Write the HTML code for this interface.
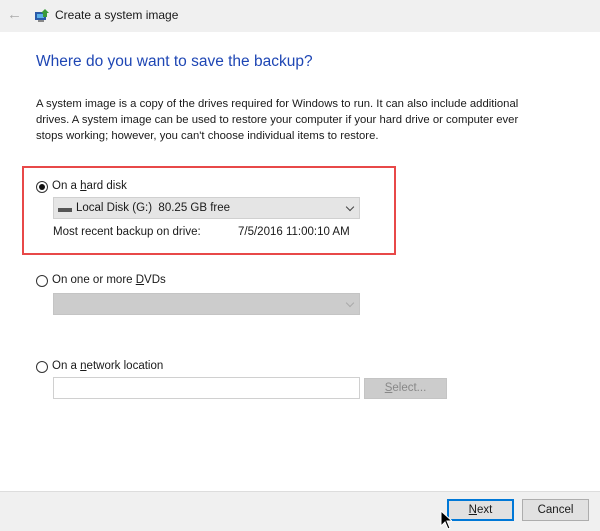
<!DOCTYPE html>
<html><head><style>
body{margin:0;width:600px;height:530px;background:#fff;font-family:"Liberation Sans",sans-serif;font-size:11.5px;color:#1a1a1a;position:relative;overflow:hidden}
.a{position:absolute;white-space:nowrap}
.radio{position:absolute;width:10px;height:10px;border:1px solid #333;border-radius:50%;background:#fff}
.radio.on::after{content:"";position:absolute;left:2px;top:2px;width:6px;height:6px;border-radius:50%;background:#111}
u{text-decoration:underline}
.chev{position:absolute;width:5px;height:5px;border-right:1px solid #444;border-bottom:1px solid #444;transform:rotate(45deg)}
</style></head><body>
<div class="a" style="left:0;top:0;width:600px;height:32px;background:#f0f0f0"></div>
<div class="a" style="left:7px;top:6px;color:#aaa;font-size:15px">&#8592;</div>
<svg class="a" style="left:34px;top:7px" width="16" height="16"><rect x="1" y="5" width="11" height="8" fill="#2a5aa8"/><rect x="3" y="7" width="7" height="4" fill="#5ab0e8"/><rect x="4" y="13" width="6" height="2" fill="#888"/><path d="M11 2 L15 6 H13 V10 H9 V6 H7 Z" fill="#3a9a3a"/></svg>
<div class="a" style="left:55px;top:8px;font-size:12px">Create a system image</div>
<div class="a" style="left:36px;top:53px;font-size:15.5px;color:#1e46b4">Where do you want to save the backup?</div>
<div class="a" style="left:36px;top:96px;line-height:16px;font-size:11.3px">A system image is a copy of the drives required for Windows to run. It can also include additional<br>drives. A system image can be used to restore your computer if your hard drive or computer ever<br>stops working; however, you can't choose individual items to restore.</div>
<div class="a" style="left:22px;top:166px;width:374px;height:89px;border:2px solid #e84848;box-sizing:border-box"></div>
<div class="radio on" style="left:36px;top:181px"></div>
<div class="a" style="left:52px;top:180px">On a <u>h</u>ard disk</div>
<div class="a" style="left:53px;top:197px;width:307px;height:22px;background:#e5e5e5;border:1px solid #d0d0d0;box-sizing:border-box"></div>
<div class="a" style="left:58px;top:208px;width:14px;height:4px;background:#555"></div>
<div class="a" style="left:76px;top:202px">Local Disk (G:)&nbsp; 80.25 GB free</div>
<div class="chev" style="left:347px;top:204px"></div>
<div class="a" style="left:53px;top:226px">Most recent backup on drive:</div>
<div class="a" style="left:238px;top:226px">7/5/2016 11:00:10 AM</div>
<div class="radio" style="left:36px;top:275px"></div>
<div class="a" style="left:52px;top:274px">On one or more <u>D</u>VDs</div>
<div class="a" style="left:53px;top:293px;width:307px;height:22px;background:#ccc;border:1px solid #c4c4c4;box-sizing:border-box"></div>
<div class="chev" style="left:347px;top:300px;border-color:#aaa"></div>
<div class="radio" style="left:36px;top:361px"></div>
<div class="a" style="left:52px;top:360px">On a <u>n</u>etwork location</div>
<div class="a" style="left:53px;top:377px;width:307px;height:22px;border:1px solid #d0d0d0;box-sizing:border-box"></div>
<div class="a" style="left:364px;top:378px;width:83px;height:21px;background:#ccc;border:1px solid #c4c4c4;box-sizing:border-box;color:#888;text-align:center;line-height:19px"><u>S</u>elect...</div>
<div class="a" style="left:0;top:491px;width:600px;height:39px;background:#f0f0f0;border-top:1px solid #ddd"></div>
<div class="a" style="left:447px;top:499px;width:67px;height:22px;background:#e1e1e1;border:2px solid #0078d7;box-sizing:border-box;text-align:center;line-height:18px"><u>N</u>ext</div>
<div class="a" style="left:522px;top:499px;width:67px;height:22px;background:#e1e1e1;border:1px solid #adadad;box-sizing:border-box;text-align:center;line-height:20px">Cancel</div>
<svg class="a" style="left:440px;top:510px" width="12" height="20"><path d="M1 1 L1 16 L5 12 L8 19 L10 18 L7 11 L12 11 Z" fill="#000" stroke="#fff" stroke-width="1"/></svg>
</body></html>
